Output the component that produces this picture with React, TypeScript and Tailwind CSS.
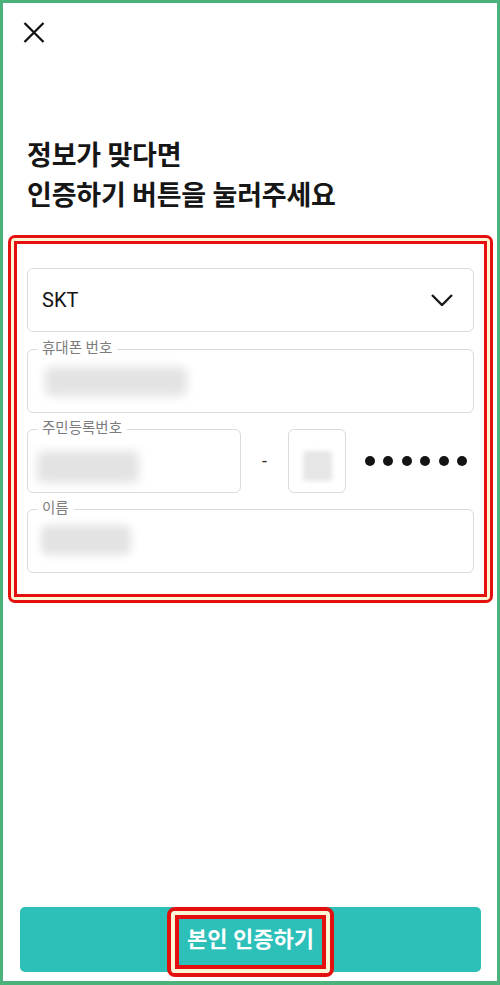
import React from "react";

const KR = { fontFamily: "Roboto, 'Noto Sans CJK KR', 'Noto Sans', sans-serif" };

function Label({ text }: { text: string }) {
  return (
    <span className="absolute left-[9px] top-[-11px] h-[20px] bg-white px-[5px] text-[14.5px] leading-[20px] text-[#7c7c7c]">
      {text}
    </span>
  );
}

export default function App() {
  return (
    <div
      className="flex h-[985px] w-[500px] flex-col border-t-[3px] border-r-[3px] border-b-[4px] border-l-[3px] border-[#4cb27c] bg-white"
      style={KR}
    >
      {/* close icon */}
      <div className="ml-[20px] mt-[19px] h-[21px] w-[22px]">
        <svg width="22" height="21" viewBox="0 0 22 21" fill="none">
          <path d="M1.5 1 L20.5 20 M20.5 1 L1.5 20" stroke="#111" strokeWidth="2.3" strokeLinecap="butt" />
        </svg>
      </div>

      {/* title */}
      <h1 className="ml-[24px] mt-[93px] text-[27px] font-bold leading-[40px] tracking-[-0.2px] text-[#161616]">
        정보가 맞다면
        <br />
        인증하기 버튼을 눌러주세요
      </h1>

      {/* annotated form */}
      <div className="ml-[5px] mr-[4px] mt-[19px] rounded-[7px] border-[3px] border-[#e3100f] bg-[#fdf5d3] p-[3px]">
        <div className="flex flex-col border-[3px] border-[#e3100f] bg-white px-[10px] pb-[21px] pt-[24px]">
          {/* carrier select */}
          <div className="flex h-[64px] items-center justify-between rounded-[6px] border border-[#dadada] pl-[14px] pr-[20px]">
            <span className="text-[20px] text-[#141414]">SKT</span>
            <svg width="22" height="12" viewBox="0 0 22 12" fill="none">
              <path d="M1 1 L11 11 L21 1" stroke="#1a1a1a" strokeWidth="2.4" />
            </svg>
          </div>

          {/* phone */}
          <div className="relative mt-[17px] h-[64px] rounded-[6px] border border-[#dadada]">
            <Label text="휴대폰 번호" />
            <div className="ml-[17px] mt-[17px] h-[29px] w-[142px] rounded-[6px] bg-[#e3e3e3] blur-[5px]" />
          </div>

          {/* resident number */}
          <div className="mt-[16px] flex h-[64px] items-center">
            <div className="relative h-full w-[214px] rounded-[6px] border border-[#dadada]">
              <Label text="주민등록번호" />
              <div className="ml-[9px] mt-[21px] h-[32px] w-[102px] rounded-[6px] bg-[#e3e3e3] blur-[5px]" />
            </div>
            <div className="w-[47px] text-center text-[18px] leading-none text-[#333]">-</div>
            <div className="h-full w-[58px] rounded-[6px] border border-[#dadada]">
              <div className="ml-[14px] mt-[21px] h-[30px] w-[29px] rounded-[3px] bg-[#e6e6e6] blur-[2px]" />
            </div>
            <div className="ml-[19px] flex gap-[8.4px]">
              <span className="h-[10px] w-[10px] rounded-full bg-[#141414]" />
              <span className="h-[10px] w-[10px] rounded-full bg-[#141414]" />
              <span className="h-[10px] w-[10px] rounded-full bg-[#141414]" />
              <span className="h-[10px] w-[10px] rounded-full bg-[#141414]" />
              <span className="h-[10px] w-[10px] rounded-full bg-[#141414]" />
              <span className="h-[10px] w-[10px] rounded-full bg-[#141414]" />
            </div>
          </div>

          {/* name */}
          <div className="relative mt-[16px] h-[64px] rounded-[6px] border border-[#dadada]">
            <Label text="이름" />
            <div className="ml-[13px] mt-[15px] h-[30px] w-[90px] rounded-[6px] bg-[#e3e3e3] blur-[4px]" />
          </div>
        </div>
      </div>

      <div className="flex-1" />

      {/* button */}
      <div className="relative mb-[9px] ml-[17px] mr-[16px] h-[65px]">
        <button className="flex h-full w-full items-center justify-center rounded-[5px] bg-[#2cc0b9] text-[22px] font-bold text-white" style={KR}>
          본인 인증하기
        </button>
        <div className="pointer-events-none absolute left-[147px] top-0 h-[70px] w-[167px] rounded-[8px] border-[4px] border-[#e3100f]">
          <div className="h-full w-full rounded-[4px] border-[4px] border-[#fdf5d3]">
            <div className="h-full w-full border-[4px] border-[#e3100f]" />
          </div>
        </div>
      </div>
    </div>
  );
}
